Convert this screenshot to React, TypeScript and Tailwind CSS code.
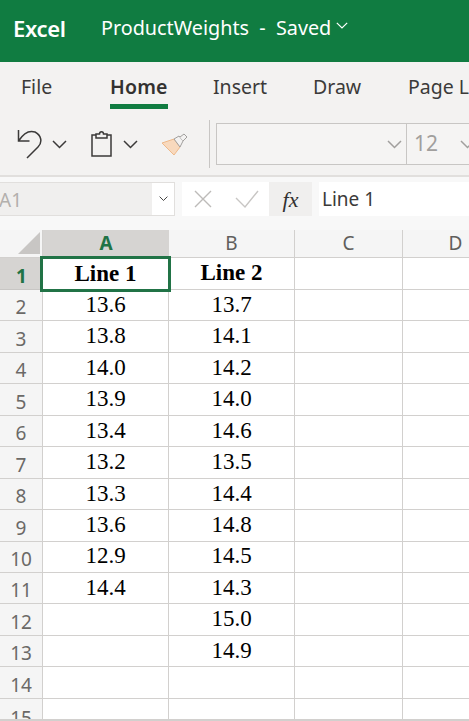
const col1 = ['Line 1', '13.6', '13.8', '14.0', '13.9', '13.4', '13.2', '13.3', '13.6', '12.9', '14.4', '', '', '', '']
const col2 = ['Line 2', '13.7', '14.1', '14.2', '14.0', '14.6', '13.5', '14.4', '14.8', '14.5', '14.3', '15.0', '14.9', '', '']

function Chevron({ className, color = '#3b3a39', w = 15 }: { className?: string; color?: string; w?: number }) {
  return (
    <svg className={`shrink-0 ${className ?? ''}`} width={w} height={w * 0.6} viewBox="0 0 15 9" fill="none" stroke={color} strokeWidth="1.5">
      <path d="M1 1l6.500 6.500L14 1" />
    </svg>
  )
}

function TitleBar() {
  return (
    <header className="h-[62px] shrink-0 bg-[#107c41] text-white flex items-center pl-[13px] pb-[6px] whitespace-nowrap">
      <span className="text-[22px] font-semibold w-[88px] shrink-0 tracking-[-0.3px]">Excel</span>
      <span className="text-[19.8px]">ProductWeights&nbsp; -&nbsp; Saved</span>
      <Chevron className="ml-[5px] mb-[5px]" color="#ffffff" w={12} />
    </header>
  )
}

function Tabs() {
  return (
    <nav className="h-[56px] shrink-0 bg-[#f3f2f1] flex pl-[21px] text-[19.5px] text-[#3b3a39] whitespace-nowrap overflow-hidden">
      <span className="w-[89px] shrink-0 pt-[10px]">File</span>
      <span className="w-[103px] shrink-0 pt-[8px]">
        <span className="inline-block font-semibold text-[#323130] border-b-[5px] border-[#107c41] leading-[34px] tracking-[0.2px]">Home</span>
      </span>
      <span className="w-[100px] shrink-0 pt-[10px]">Insert</span>
      <span className="w-[95px] shrink-0 pt-[10px]">Draw</span>
      <span className="shrink-0 pt-[10px]">Page Layout</span>
    </nav>
  )
}

function Toolbar() {
  return (
    <div className="h-[59px] shrink-0 bg-[#f3f2f1] border-b-2 border-[#e1dfdd] flex items-center pl-[17px] pb-[5px] overflow-hidden">
      <svg className="shrink-0" width="26" height="30" viewBox="0 0 26 30" fill="none" stroke="#3b3a39" strokeWidth="1.5">
        <path d="M1.500 1v11h11M1.500 12C6 5 12 1 18 3c6 3 8 10 3 15L10 29" />
      </svg>
      <Chevron className="ml-[9px]" />
      <svg className="ml-[24px] shrink-0" width="21" height="26" viewBox="0 0 21 26" fill="none" stroke="#3b3a39" strokeWidth="1.5">
        <path d="M5 4H1v21h19V4h-4" />
        <path d="M5 7V3h3.500c0-3 4-3 4 0H16v4z" />
      </svg>
      <Chevron className="ml-[11px]" />
      <svg className="ml-[23px] shrink-0" width="27" height="23" viewBox="0 0 27 23" fill="none">
        <path d="M1 10l12-4 6 8-6 8z" fill="#f8d9bd" stroke="#eeb98a" strokeWidth="1" />
        <path d="M13 6l5-3 4 5-3 6z" fill="#f3f2f1" stroke="#a19f9d" strokeWidth="1" />
        <path d="M19 4l4-3 3 3-4 4" fill="#f3f2f1" stroke="#a19f9d" strokeWidth="1" />
      </svg>
      <div className="w-px h-[48px] shrink-0 bg-[#c8c6c4] ml-[21px]" />
      <div className="ml-[6px] h-[42px] w-[191px] shrink-0 border border-[#c8c6c4] bg-[#f5f4f3] flex items-center justify-end pr-[4px]">
        <Chevron color="#a19f9d" w={15} />
      </div>
      <div className="h-[42px] w-[70px] shrink-0 border-y border-[#c8c6c4] bg-[#f5f4f3] flex items-center pl-[7px] text-[21px] text-[#a19f9d] whitespace-nowrap">
        <span>12</span>
        <Chevron className="ml-[22px]" color="#a19f9d" />
      </div>
    </div>
  )
}

function FormulaBar() {
  return (
    <div className="h-[53px] shrink-0 bg-[#f8f8f8] flex pt-[5px] pb-[14px] items-stretch">
      <div className="w-[175px] shrink-0 bg-[#f0efee] border border-l-0 border-[#e1dfdd] flex items-center text-[19px] text-[#b3b0ad]">
        <span className="flex-1 -ml-[1px] pt-[2px]">A1</span>
        <span className="w-[22px] h-full bg-white flex items-center justify-center">
          <Chevron color="#323130" w={9} />
        </span>
      </div>
      <div className="w-[87px] shrink-0 ml-[7px] bg-white flex items-center pl-[12px] gap-[23px]">
        <svg width="18" height="18" viewBox="0 0 18 18" fill="none" stroke="#bdbbb9" strokeWidth="1.4">
          <path d="M1 1l16 16M17 1L1 17" />
        </svg>
        <svg width="24" height="18" viewBox="0 0 24 18" fill="none" stroke="#c8c6c4" strokeWidth="1.4">
          <path d="M1 8l9 9L23 1" />
        </svg>
      </div>
      <div className="w-[43px] shrink-0 bg-[#f0efee] flex items-center justify-center font-['Liberation_Serif',serif] italic text-[22px] text-[#323130]">
        fx
      </div>
      <div className="flex-1 ml-[7px] bg-white flex items-center pl-[3px] text-[19px] text-[#3b3a39]">Line 1</div>
    </div>
  )
}

function ColHeader({ label, active }: { label: string; active?: boolean }) {
  return (
    <div
      className={
        active
          ? 'bg-[#d6d4d2] border-b border-[#c8c6c4] flex items-center justify-center text-[19px] font-bold text-[#217346]'
          : 'border-r border-b border-[#d2d0ce] bg-[#f5f5f5] flex items-center justify-center text-[19px] text-[#605e5c]'
      }
    >
      {label}
    </div>
  )
}

function Row({ n, a, b }: { n: number; a: string; b: string }) {
  const first = n === 1
  const cell = "border-r border-b border-[#d2d0ce] flex items-center justify-center text-[23px] text-black font-['Liberation_Serif',serif]"
  return (
    <>
      <div
        className={
          first
            ? 'bg-[#d6d4d2] border-b border-[#c8c6c4] flex items-center justify-center text-[19px] font-bold text-[#217346] pt-[5px]'
            : 'bg-[#f5f5f5] border-r border-b border-[#d2d0ce] flex items-center justify-center text-[19px] text-[#6b6967] pt-[5px]'
        }
      >
        {n}
      </div>
      <div
        className={
          first
            ? "border-[3px] -ml-[3px] -mr-[2px] -my-[2px] z-10 border-[#217346] flex items-center justify-center text-[23px] font-bold text-black font-['Liberation_Serif',serif] relative"
            : cell
        }
      >
        {a}
      </div>
      <div className={`${cell} ${first ? 'font-bold' : ''}`}>{b}</div>
      <div className={cell} />
      <div className={cell} />
    </>
  )
}

function Sheet() {
  return (
    <div className="flex-1 min-h-0 overflow-hidden bg-white grid grid-cols-[43px_126px_126px_108px_106px] grid-rows-[28px_32px_repeat(13,31.45px)]">
      <div className="bg-[#f5f5f5] border-r border-b border-[#d2d0ce] flex items-end justify-end pr-[2px] pb-[3px]">
        <div className="w-0 h-0 border-l-[22px] border-l-transparent border-b-[22px] border-b-[#c8c6c4]" />
      </div>
      <ColHeader label="A" active />
      <ColHeader label="B" />
      <ColHeader label="C" />
      <ColHeader label="D" />
      {col1.map((v, i) => (
        <Row key={i} n={i + 1} a={v} b={col2[i]} />
      ))}
    </div>
  )
}

export default function App() {
  return (
    <div className="w-[469px] h-[721px] overflow-hidden flex flex-col bg-white font-['Noto_Sans',sans-serif]">
      <TitleBar />
      <Tabs />
      <Toolbar />
      <FormulaBar />
      <Sheet />
      <div className="h-[2px] shrink-0 bg-[#d2d0ce]" />
    </div>
  )
}
